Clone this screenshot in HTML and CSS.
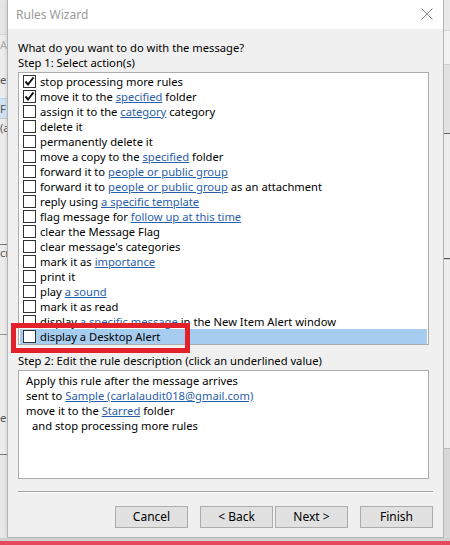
FILE: index.html
```html
<!DOCTYPE html>
<html>
<head>
<meta charset="utf-8">
<link rel="stylesheet" href="styles.css">
</head>
<body>
<div class="screen">
  <div class="main">
    <div class="behind-left">
      <div class="bl bl-top"></div>
      <div class="bl bl-a">A</div>
      <div class="bl bl-e">e:</div>
      <div class="bl bl-sel">F</div>
      <div class="bl bl-p">(a</div>
      <div class="bl bl-gap"></div>
      <div class="bl bl-cr">cr</div>
      <div class="bl bl-gap2"></div>
      <div class="bl bl-e2">e</div>
      <div class="bl bl-rest"></div>
    </div>
    <div class="dialog">
      <div class="titlebar">
        <span class="title">Rules Wizard</span>
        <svg class="close" width="12" height="12" viewBox="0 0 12 12"><path d="M0.5 0.5L11.5 11.5M11.5 0.5L0.5 11.5" stroke="#8a8a8a" stroke-width="1" fill="none"/></svg>
      </div>
      <div class="body">
        <div class="label">What do you want to do with the message?</div>
        <div class="label">Step 1: Select action(s)</div>
        <div class="list">
          <div class="row"><span class="cb checked"><svg width="11" height="11" viewBox="0 0 11 11"><path d="M1.5 5.5L4 8.5L9.5 1.5" stroke="#111" stroke-width="2" fill="none"/></svg></span>stop processing more rules</div>
          <div class="row"><span class="cb checked"><svg width="11" height="11" viewBox="0 0 11 11"><path d="M1.5 5.5L4 8.5L9.5 1.5" stroke="#111" stroke-width="2" fill="none"/></svg></span>move it to the&nbsp;<a>specified</a>&nbsp;folder</div>
          <div class="row"><span class="cb"></span>assign it to the&nbsp;<a>category</a>&nbsp;category</div>
          <div class="row"><span class="cb"></span>delete it</div>
          <div class="row"><span class="cb"></span>permanently delete it</div>
          <div class="row"><span class="cb"></span>move a copy to the&nbsp;<a>specified</a>&nbsp;folder</div>
          <div class="row"><span class="cb"></span>forward it to&nbsp;<a>people or public group</a></div>
          <div class="row"><span class="cb"></span>forward it to&nbsp;<a>people or public group</a>&nbsp;as an attachment</div>
          <div class="row"><span class="cb"></span>reply using&nbsp;<a>a specific template</a></div>
          <div class="row"><span class="cb"></span>flag message for&nbsp;<a>follow up at this time</a></div>
          <div class="row"><span class="cb"></span>clear the Message Flag</div>
          <div class="row"><span class="cb"></span>clear message's categories</div>
          <div class="row"><span class="cb"></span>mark it as&nbsp;<a>importance</a></div>
          <div class="row"><span class="cb"></span>print it</div>
          <div class="row"><span class="cb"></span>play&nbsp;<a>a sound</a></div>
          <div class="row"><span class="cb"></span>mark it as read</div>
          <div class="row"><span class="cb"></span>display&nbsp;<a>a specific message</a>&nbsp;in the New Item Alert window</div>
          <div class="row selected"><span class="cb"></span>display a Desktop Alert</div>
          <div class="redbox"></div>
        </div>
        <div class="label step2">Step 2: Edit the rule description (click an underlined value)</div>
        <div class="desc">
          <div>Apply this rule after the message arrives</div>
          <div>sent to&nbsp;<a>Sample (carlalaudit018@gmail.com)</a></div>
          <div>move it to the&nbsp;<a>Starred</a>&nbsp;folder</div>
          <div class="indent">and stop processing more rules</div>
        </div>
        <div class="sep"></div>
        <div class="buttons">
          <button class="btn">Cancel</button>
          <div class="pair">
            <button class="btn">&lt; Back</button>
            <button class="btn">Next &gt;</button>
          </div>
          <button class="btn">Finish</button>
        </div>
      </div>
    </div>
    <div class="behind-right">
      <div class="br br-top"></div>
      <div class="br br-a"></div>
      <div class="br br-b"></div>
      <div class="br br-c"></div>
      <div class="br br-d"></div>
      <div class="br br-e"></div>
    </div>
  </div>
  <div class="bottom">
    <div class="bottom-grey"></div>
    <div class="bottom-red"></div>
  </div>
</div>
</body>
</html>
```
FILE: styles.css
```css
* { box-sizing: border-box; }
html, body { margin: 0; padding: 0; }
body {
  width: 450px;
  height: 545px;
  overflow: hidden;
  background: #e4e4e4;
  font-family: "Noto Sans", "Open Sans", sans-serif;
  font-size: 11.2px;
  color: #000;
}
.screen { display: flex; flex-direction: column; height: 545px; }
.main { display: flex; height: 538px; }

.behind-left {
  width: 7px;
  display: flex;
  flex-direction: column;
  overflow: hidden;
  background: #ececec;
  color: #555;
  line-height: 15px;
  white-space: nowrap;
}
.bl { flex: none; overflow: hidden; }
.bl-top { height: 34px; background: #e6e6e6; }
.bl-a { height: 38px; padding-top: 2px; color: #aaa; border-top: 1px solid #d6d6d6; }
.bl-e { height: 26px; padding-top: 0; }
.bl-sel { height: 20px; background: #cfe3f5; border-top: 1px solid #b9d1ea; padding-top: 2px; }
.bl-p { height: 20px; border-top: 1px solid #c8c8c8; padding-top: 1px; }
.bl-gap { height: 107px; border-bottom: 1px solid #777; }
.bl-cr { height: 90px; border-bottom: 1px solid #999; }
.bl-gap2 { height: 75px; }
.bl-e2 { height: 45px; border-bottom: 1px solid #777; }
.bl-rest { flex: 1; background: #e8e8e8; }

.behind-right {
  width: 6px;
  display: flex;
  flex-direction: column;
  background: #ededed;
}
.br { flex: none; }
.br-top { height: 30px; background: #e8e8e8; }
.br-a { height: 34px; border-top: 1px solid #d8d8d8; background: #f2f2f2; }
.br-b { height: 70px; border-top: 1px solid #cfcfcf; border-bottom: 1px solid #666; background: #e2e2e2; }
.br-c { height: 125px; border-bottom: 1px solid #555; }
.br-d { height: 190px; border-top: 1px solid #cfcfcf; border-bottom: 1px solid #bbb; }
.br-e { flex: 1; background: #d8d8d8; }

.dialog {
  width: 437px;
  display: flex;
  flex-direction: column;
  background: #f0f0f0;
  border: 1px solid #b4b4b4;
  border-top: none;
  box-shadow: 0 0 4px rgba(0,0,0,0.15);
}
.titlebar {
  height: 29px;
  background: #fff;
  display: flex;
  align-items: center;
  justify-content: space-between;
  padding: 0 10px 1px 8px;
}
.title { color: #9a9a9a; font-size: 12px; }
.close { display: block; }

.body {
  flex: 1;
  padding: 11px 10px 0 10px;
  display: flex;
  flex-direction: column;
}
.label { line-height: 15px; height: 15px; white-space: nowrap; }
.step2 { margin-top: 8px; }

a { color: #2b5ea8; text-decoration: underline; }

.list {
  position: relative;
  margin-top: 2px;
  width: 411px;
  height: 273px;
  background: #fff;
  border: 1px solid #acacac;
  padding: 1px 1px 0 1px;
}
.row {
  height: 15px;
  line-height: 15px;
  display: flex;
  align-items: center;
  white-space: nowrap;
  padding-left: 3px;
}
.row.selected { background: #a6cdf0; }
.cb {
  width: 13px;
  height: 13px;
  border: 1px solid #333;
  background: #fff;
  margin-right: 4px;
  flex: none;
  display: flex;
  align-items: center;
  justify-content: center;
}
.cb svg { display: block; }
.redbox {
  position: absolute;
  left: -8px;
  top: 250px;
  width: 179px;
  height: 30px;
  border: 5px solid #e2212b;
}

.desc {
  margin-top: 2px;
  width: 411px;
  height: 109px;
  background: #fff;
  border: 1px solid #acacac;
  padding: 2px 7px;
  line-height: 15px;
  white-space: nowrap;
}
.indent { padding-left: 6px; }

.sep {
  margin-top: 12px;
  height: 2px;
  border-top: 1px solid #a0a0a0;
  border-bottom: 1px solid #fff;
  width: 415px;
}
.buttons {
  margin-top: 13px;
  display: flex;
  justify-content: flex-end;
  gap: 12px;
  width: 415px;
}
.pair { display: flex; gap: 2px; }
.btn {
  width: 73px;
  height: 22px;
  background: #e1e1e1;
  border: 1px solid #adadad;
  font-family: inherit;
  font-size: 12px;
  color: #000;
  padding: 0;
  line-height: 18px;
}

.bottom { height: 7px; display: flex; flex-direction: column; }
.bottom-grey { height: 3px; background: #d0d0d0; }
.bottom-red { flex: 1; background: #e5485a; }
```
